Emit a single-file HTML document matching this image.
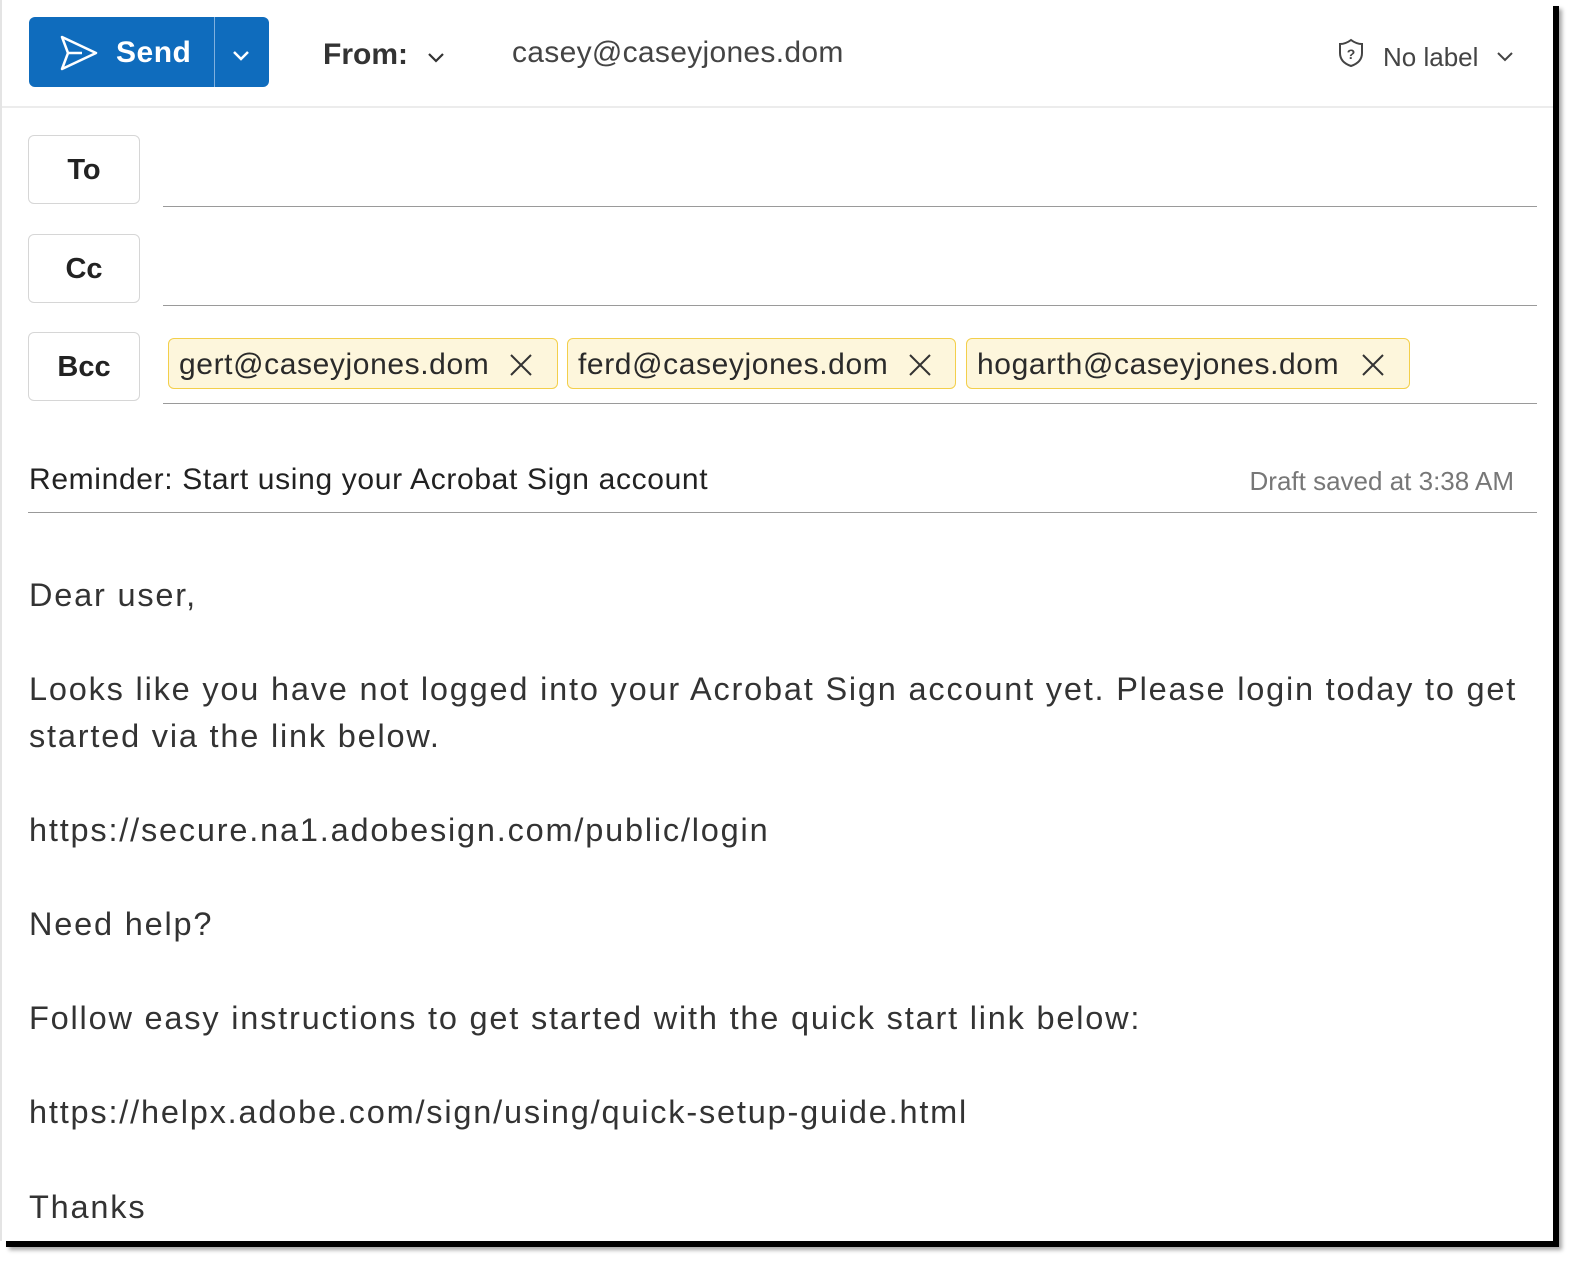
<!DOCTYPE html>
<html><head><meta charset="utf-8"><style>
*{margin:0;padding:0;box-sizing:border-box}
body{width:1580px;height:1265px;background:#fff;position:relative;overflow:hidden;font-family:"Liberation Sans",sans-serif;color:#333}
.frame{position:absolute;left:0;top:0;width:1553px;height:1241px;background:#fff;border-left:2px solid #e4e4e4;box-shadow:6px 6px 0 #000,9px 9px 4px rgba(0,0,0,.35)}
.a{position:absolute;white-space:nowrap}
.btn{position:absolute;left:28px;width:112px;height:69px;border:1px solid #d6d6d6;border-radius:6px;font-weight:bold;font-size:29px;color:#222;text-align:center;line-height:69px}
.ln{position:absolute;left:163px;width:1374px;height:1px;background:#9a9a9a}
.chip{position:absolute;top:338px;height:51px;background:#fdf6dc;border:1px solid #f3cf4b;border-radius:6px;font-size:30px;color:#2a2a2a;line-height:51px;padding-left:10px;letter-spacing:.6px}
.chip svg{position:absolute;top:14px}
.body{font-size:32.5px;color:#333;letter-spacing:1.8px}
</style></head><body>
<div class="frame"></div>
<div class="a" style="left:29px;top:17px;width:240px;height:70px;background:#0f6cbd;border-radius:6px"></div>
<div class="a" style="left:214px;top:17px;width:1px;height:70px;background:#7fb0de"></div>
<svg class="a" style="left:60px;top:35px" width="38" height="36" viewBox="0 0 38 36"><path d="M2 2 L36 18 L2 34 L8 18 Z M8 18 H22" fill="none" stroke="#fff" stroke-width="2.5" stroke-linejoin="round"/></svg>
<div class="a" style="left:116px;top:36px;font-size:30px;font-weight:bold;color:#fff;letter-spacing:.5px">Send</div>
<svg class="a" style="left:232px;top:50px" width="18" height="12"><path d="M2 2 L9 9 L16 2" fill="none" stroke="#fff" stroke-width="2.5"/></svg>
<div class="a" style="left:323px;top:38px;font-size:30px;color:#333;font-weight:bold">From:</div>
<svg class="a" style="left:427px;top:52px" width="18" height="12"><path d="M2 2 L9 9 L16 2" fill="none" stroke="#333" stroke-width="2.2"/></svg>
<div class="a" style="left:512px;top:36px;font-size:30px;color:#444;letter-spacing:.3px">casey@caseyjones.dom</div>
<svg class="a" style="left:1337px;top:38px" width="28" height="30" viewBox="0 0 28 30"><path d="M14 2 C10 5 6 6 3 6 V15 C3 22 8 26 14 28 C20 26 25 22 25 15 V6 C22 6 18 5 14 2Z" fill="none" stroke="#444" stroke-width="2"/><text x="14" y="21" font-size="14" font-weight="bold" text-anchor="middle" fill="#444" font-family="Liberation Sans">?</text></svg>
<div class="a" style="left:1383px;top:42px;font-size:26px;color:#444">No label</div>
<svg class="a" style="left:1496px;top:51px" width="18" height="12"><path d="M2 2 L9 9 L16 2" fill="none" stroke="#444" stroke-width="2"/></svg>
<div class="a" style="left:2px;top:106px;width:1551px;height:2px;background:#ececec"></div>
<div class="btn" style="top:135px">To</div>
<div class="ln" style="top:206px"></div>
<div class="btn" style="top:234px">Cc</div>
<div class="ln" style="top:305px"></div>
<div class="btn" style="top:332px">Bcc</div>
<div class="ln" style="top:403px"></div>
<div class="chip" style="left:168px;width:390px">gert@caseyjones.dom<svg style="left:340px" width="24" height="24"><path d="M2 2L22 22M22 2L2 22" stroke="#333" stroke-width="2"/></svg></div>
<div class="chip" style="left:567px;width:389px">ferd@caseyjones.dom<svg style="left:340px" width="24" height="24"><path d="M2 2L22 22M22 2L2 22" stroke="#333" stroke-width="2"/></svg></div>
<div class="chip" style="left:966px;width:444px">hogarth@caseyjones.dom<svg style="left:394px" width="24" height="24"><path d="M2 2L22 22M22 2L2 22" stroke="#333" stroke-width="2"/></svg></div>
<div class="a" style="left:29px;top:463px;font-size:30px;color:#222;letter-spacing:.65px">Reminder: Start using your Acrobat Sign account</div>
<div class="a" style="right:66px;top:466px;font-size:26px;color:#777">Draft saved at 3:38 AM</div>
<div class="a" style="left:28px;top:512px;width:1509px;height:1px;background:#999"></div>
<div class="a body" style="left:29px;top:577px">Dear user,</div>
<div class="a body" style="left:29px;top:671px">Looks like you have not logged into your Acrobat Sign account yet. Please login today to get</div>
<div class="a body" style="left:29px;top:718px">started via the link below.</div>
<div class="a body" style="left:29px;top:812px">https://secure.na1.adobesign.com/public/login</div>
<div class="a body" style="left:29px;top:906px">Need help?</div>
<div class="a body" style="left:29px;top:1000px">Follow easy instructions to get started with the quick start link below:</div>
<div class="a body" style="left:29px;top:1094px">https://helpx.adobe.com/sign/using/quick-setup-guide.html</div>
<div class="a body" style="left:29px;top:1189px">Thanks</div>
</body></html>
